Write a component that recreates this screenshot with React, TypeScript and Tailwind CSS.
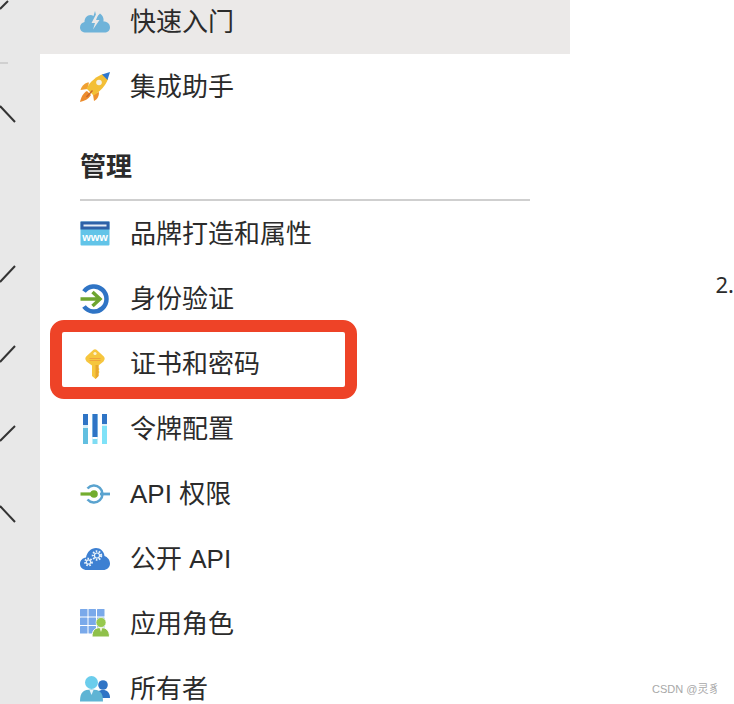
import React from "react";

function CloudBolt() {
  return (
    <svg width="30" height="24" viewBox="0 0 30 24">
      <path d="M6 22.500C2.500 22.500 0 20.500 0 17.500C0 14.500 2 12.500 4.500 12C4.500 8 7 5 10.500 5C11.500 5 12.500 5.300 13.500 6L15 1L16.500 7L20 3.500C22.500 5 24 8 23.500 11.500C27.500 11.500 30 14 30 17.500C30 20.500 27.500 22.500 24.500 22.500Z" fill="#6fb3d9" />
      <path d="M17 2.500L11.500 13H15L13 19.500L19.500 10H16L18.500 4Z" fill="#ebe9e8" />
    </svg>
  );
}

function Rocket() {
  return (
    <svg width="30" height="30" viewBox="0 0 30 30">
      <path d="M9 10.500C5.500 10.500 2 13 0.500 18L7.500 17Z" fill="#f0a032" />
      <path d="M19 20C19 24 17.500 27.500 14 29L13 22.500Z" fill="#ee9230" />
      <path d="M7 19C3 21 1 25.500 0 30C4.500 29 8.500 27 11 23Z" fill="#ec8c2c" />
      <path d="M6.500 16.500C10 9.500 17 4 23 2L28 7C26 13 20.500 19.500 13.500 23.500Z" fill="#f3bf36" />
      <path d="M22 2.500L30 0L27.500 8Z" fill="#2f78cf" />
      <circle cx="19" cy="10.500" r="2.800" fill="#f6f2e6" />
      <path d="M6 24.500L12 18L13 19L7 25.500Z" fill="#c9662a" />
    </svg>
  );
}

function WwwWindow() {
  return (
    <svg width="30" height="25" viewBox="0 0 30 25">
      <rect x="0.500" y="0.500" width="29" height="24" rx="1" fill="#62c4e8" />
      <rect x="0.500" y="0.500" width="29" height="8" fill="#2e62a8" />
      <rect x="3.500" y="3.500" width="23" height="2" fill="#e6edf6" />
    </svg>
  );
}

function SignIn() {
  return (
    <svg width="30" height="30" viewBox="0 0 30 30">
      <path d="M4 7.500A12.500 12.500 0 1 1 4 22.500" fill="none" stroke="#2f74c5" strokeWidth="4.500" />
      <path d="M0.500 15H19M12.500 8L20 15L12.500 22" fill="none" stroke="#6ea52f" strokeWidth="3.500" />
    </svg>
  );
}

function KeyIcon() {
  return (
    <svg width="20" height="30" viewBox="0 0 20 30">
      <path d="M8.500 0.800Q10 -0.300 11.500 0.800L18.800 7.500Q20 8.800 19.500 10.500L18.500 12.500L13.500 16.500V19L14.500 20L13.500 21.500L14.500 23L13.500 24.500V27L10.500 30L7 27V16.500L1.500 12.500L0.500 10.500Q0 8.800 1.200 7.500Z" fill="#f6c63e" />
      <path d="M13.500 16V27L10.500 30V16Z" fill="#e8a72e" />
      <circle cx="10" cy="4.500" r="1.600" fill="#fdf3cf" />
      <path d="M4.500 9.500H15.500M4.500 11.500H15.500" stroke="#ee9a3c" strokeWidth="0.800" />
    </svg>
  );
}

function Sliders() {
  return (
    <svg width="24" height="30" viewBox="0 0 24 30">
      <rect x="0" y="0" width="5" height="30" fill="#7fdcf3" />
      <rect x="0" y="11" width="5" height="3" fill="#d8eef8" />
      <rect x="0" y="0" width="5" height="11" fill="#2f74c5" />
      <rect x="0" y="14" width="5" height="16" fill="#62bfe0" />
      <rect x="9.500" y="0" width="5" height="30" fill="#7fdcf3" />
      <rect x="9.500" y="0" width="5" height="23" fill="#2f74c5" />
      <rect x="9.500" y="23" width="5" height="2" fill="#ffffff" />
      <rect x="19" y="0" width="5" height="30" fill="#7fe2f8" />
      <rect x="19" y="0" width="5" height="10" fill="#2f74c5" />
      <rect x="19" y="10" width="5" height="2" fill="#d8eef8" />
    </svg>
  );
}

function ApiLink() {
  return (
    <svg width="30" height="20" viewBox="0 0 30 20">
      <path d="M7.500 4.500A8.500 8.500 0 1 1 7.500 15.500" fill="none" stroke="#5aa3cf" strokeWidth="2.500" />
      <path d="M20 10H30" stroke="#5aa3cf" strokeWidth="2.800" />
      <path d="M0.500 10H14" stroke="#74ad2e" strokeWidth="3.200" />
      <circle cx="14" cy="10" r="3.800" fill="#74ad2e" />
    </svg>
  );
}

function Gear({ x, y, r }: { x: number; y: number; r: number }) {
  return (
    <g>
      <circle cx={x} cy={y} r={r} fill="none" stroke="#eaf3fb" strokeWidth={r * 0.5} strokeDasharray="1.600 1.400" />
      <circle cx={x} cy={y} r={r * 0.6} fill="none" stroke="#eaf3fb" strokeWidth="1.200" />
    </g>
  );
}

function CloudGears() {
  return (
    <svg width="30" height="24" viewBox="0 0 30 24">
      <path d="M7 23C3 23 0 20.500 0 17C0 13.500 2.500 11 6 10.500C7 5 11 1 16 1C20.500 1 24 4.500 24.500 9C27.500 10 30 13 30 16.500C30 20.500 27 23 23 23Z" fill="#3d80d2" />
      <Gear x={8.500} y={15} r={3.500} />
      <Gear x={17} y={8.500} r={4.200} />
    </svg>
  );
}

function AppRoles() {
  return (
    <svg width="30" height="30" viewBox="0 0 30 30">
      {[0, 8.500, 17].map((x) =>
        [0, 8.500, 17].map((y) => (
          <rect key={`${x}-${y}`} x={x} y={y} width="7.500" height="7.500" rx="0.500" fill="#7aa9ea" />
        ))
      )}
      <path d="M12 28C12 21 15 18.500 21 18.500C26 18.500 29.500 21 29.500 28Z" fill="#8fc04a" stroke="#fff" strokeWidth="1" />
      <circle cx="21" cy="13.500" r="5" fill="#97c94f" stroke="#fff" strokeWidth="0.600" />
      <path d="M19.500 19H22.500L21 23Z" fill="#eef6dd" />
    </svg>
  );
}

function Owners() {
  return (
    <svg width="30" height="26" viewBox="0 0 30 26">
      <circle cx="23" cy="9" r="4.800" fill="#2f74c5" />
      <path d="M16 22C16 16 18.500 14 23 14C27 14 30 16.500 30 22Z" fill="#2f74c5" />
      <circle cx="11.500" cy="6.500" r="6.500" fill="#6bcdec" />
      <path d="M0 25.500C0 16 3.500 13.500 11.500 13.500C19.500 13.500 23 16 23 25.500Z" fill="#5fb4d4" />
      <path d="M9.500 14H13.500L11.500 19Z" fill="#e6f4fa" />
    </svg>
  );
}

function NavRow({ icon, label }: { icon: React.ReactNode; label: string }) {
  return (
    <div className="flex items-center h-[65px] pl-10">
      <div className="w-[30px] flex justify-center shrink-0">{icon}</div>
      <span className="ml-5 mt-px text-[26px] leading-none text-[#2b2b2b] whitespace-nowrap">{label}</span>
    </div>
  );
}

export default function App() {
  return (
    <div
      className="relative flex w-[734px] h-[704px] overflow-hidden bg-white"
      style={{ fontFamily: '"Liberation Sans", "Noto Sans CJK SC", sans-serif' }}
    >
      <div className="w-10 shrink-0 bg-[#e8e8e8]">
        <svg width="40" height="704" viewBox="0 0 40 704">
          <g stroke="#333" strokeWidth="2" fill="none">
            <path d="M0 9L8 1" />
            <path d="M0 106L15 122" />
            <path d="M0 282L15 266" />
            <path d="M0 362L15 346" />
            <path d="M0 441L15 426" />
            <path d="M0 506L15 522" />
          </g>
          <path d="M0 63H8" stroke="#c8c8c8" strokeWidth="1.500" />
        </svg>
      </div>

      <div className="w-[530px] shrink-0">
        <div className="flex items-center h-[54px] pl-10 pb-[10px] bg-[#ebe9e8]">
          <div className="w-[30px] flex justify-center shrink-0">
            <CloudBolt />
          </div>
          <span className="ml-5 text-[26px] leading-none text-[#2b2b2b]">快速入门</span>
        </div>
        <NavRow icon={<Rocket />} label="集成助手" />

        <div className="mx-10 h-[82px] border-b-2 border-[#cfcfcf] pt-[33px]">
          <h2 className="text-[26px] leading-[30px] font-bold text-[#2b2b2b]">管理</h2>
        </div>

        <NavRow
          icon={
            <div className="relative flex">
              <WwwWindow />
              <span className="absolute left-0 right-0 top-[10px] text-center text-[11px] leading-3 font-bold text-white">www</span>
            </div>
          }
          label="品牌打造和属性"
        />
        <NavRow icon={<SignIn />} label="身份验证" />
        <NavRow icon={<KeyIcon />} label="证书和密码" />
        <NavRow icon={<Sliders />} label="令牌配置" />
        <NavRow icon={<ApiLink />} label="API 权限" />
        <NavRow icon={<CloudGears />} label="公开 API" />
        <NavRow icon={<AppRoles />} label="应用角色" />
        <NavRow icon={<Owners />} label="所有者" />
      </div>

      <div className="flex-1 flex justify-end pt-[270px]">
        <span className="font-['Noto_Sans'] text-[22px] leading-7 text-[#2b2b2b]">2.</span>
      </div>

      <div className="absolute left-[50px] top-[320px] w-[307px] h-[79px] border-[12px] border-[#ee4327] rounded-[14px]" />
      <span className="absolute left-[652px] top-[682px] text-[11px] leading-[14px] text-[#a8a8a8]">CSDN @灵豸</span>
    </div>
  );
}
